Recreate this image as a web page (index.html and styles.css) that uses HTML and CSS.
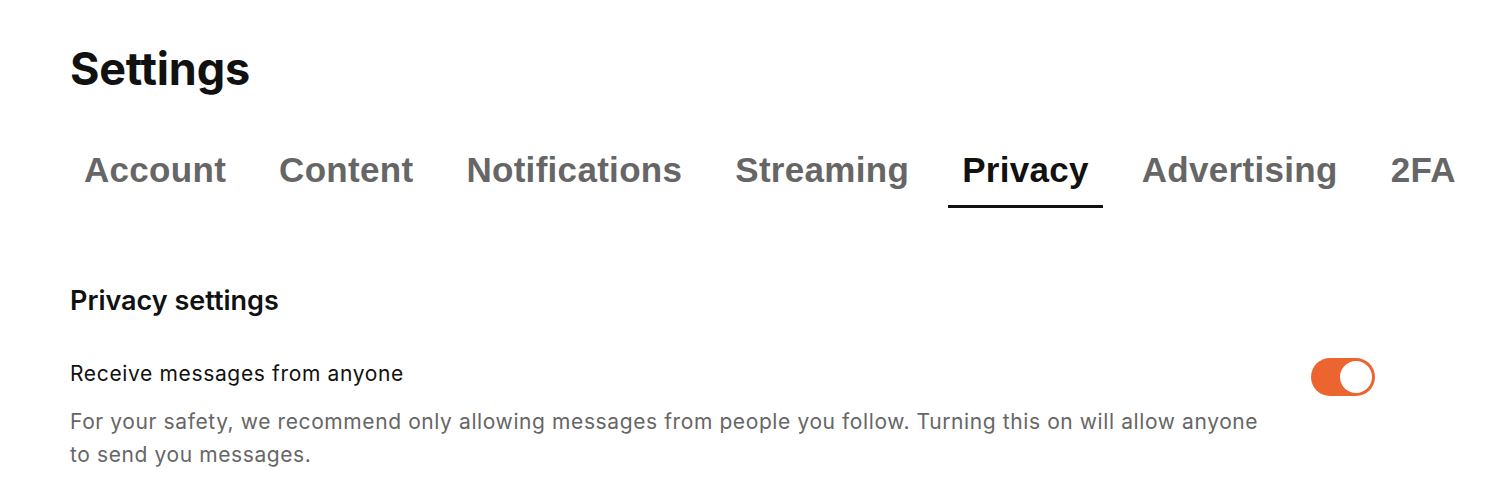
FILE: index.html
```html
<!DOCTYPE html>
<html>
<head>
<meta charset="utf-8" />
<title>Settings</title>
<link rel="stylesheet" href="styles.css">
</head>
<body>
<div class="page">
    <h1 class="title">Settings</h1>

    <div class="tabs">
        <a class="tab">Account</a>
        <a class="tab">Content</a>
        <a class="tab">Notifications</a>
        <a class="tab">Streaming</a>
        <a class="tab cur">Privacy</a>
        <a class="tab">Advertising</a>
        <a class="tab">2FA</a>
    </div>

    <div class="section">
        <h2 class="section-title">Privacy settings</h2>
        <div class="row">
            <div class="row-text">
                <div class="label">Receive messages from anyone</div>
                <p class="desc">For your safety, we recommend only allowing messages from people you follow. Turning this on will allow anyone to send you messages.</p>
            </div>
            <span class="toggle on"><span class="knob"></span></span>
        </div>
    </div>
</div>
</body>
</html>
```

FILE: styles.css
```css
body{margin:0;padding:0;background:#fff;font-family:Inter,"Noto Sans",sans-serif;color:#111;}
.page{padding:0 70px;}
.title{margin:0;padding-top:42px;font-size:45px;line-height:54px;font-weight:700;letter-spacing:-0.2px;}
.tabs{display:flex;gap:25px;margin-top:54px;}
.tab{font-family:"Liberation Sans",Arial,sans-serif;font-weight:700;font-size:35px;line-height:40px;letter-spacing:0.3px;color:#666;padding:0 14px 15px;border-bottom:3px solid transparent;cursor:pointer;}
.tab.cur{color:#111;border-bottom-color:#111;}
.section{margin-top:77px;}
.section-title{margin:0;font-size:27px;line-height:32px;font-weight:600;}
.row{display:flex;align-items:flex-start;margin-top:44px;}
.row-text{width:1200px;}
.label{font-size:21px;line-height:26px;letter-spacing:0.65px;}
.desc{margin:18px 0 0;font-size:21px;line-height:33px;letter-spacing:0.6px;color:#666;}
.toggle{margin-left:41px;margin-top:-3px;width:64px;height:38px;border-radius:19px;background:#ec6430;display:flex;align-items:center;justify-content:flex-end;padding:0 3px;box-sizing:border-box;}
.knob{width:32px;height:32px;border-radius:50%;background:#fff;}
```
